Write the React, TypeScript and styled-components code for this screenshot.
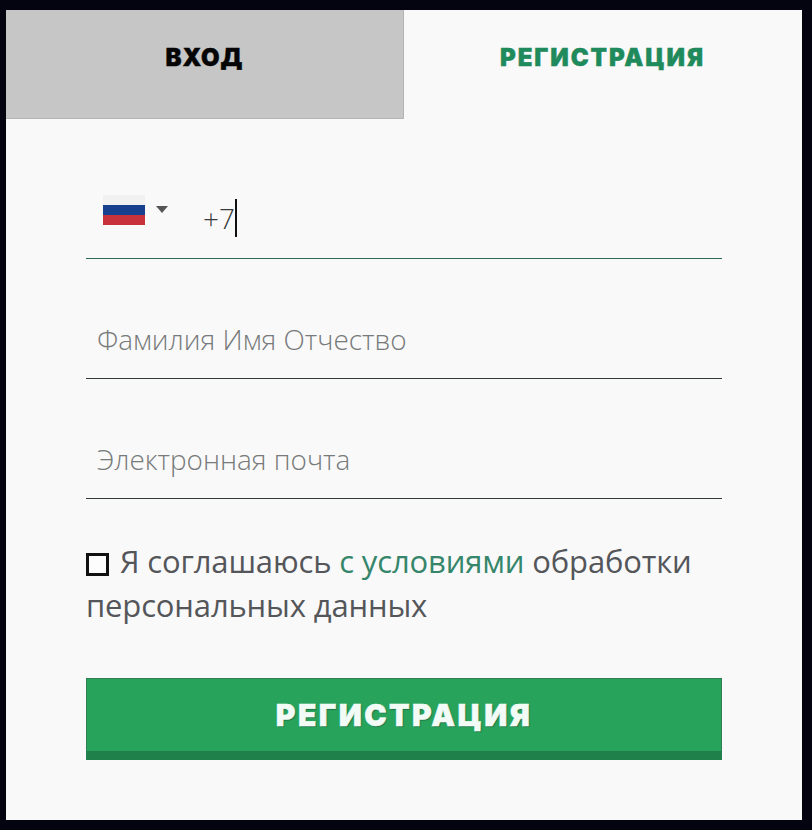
import React from "react";
import styled, { createGlobalStyle } from "styled-components";

const Global = createGlobalStyle`
  html, body { margin: 0; padding: 0; background: #02030f; }
  #root { width: 812px; height: 830px; overflow: hidden; }
`;

const Page = styled.div`
  width: 812px;
  height: 830px;
  box-sizing: border-box;
  padding: 10px 10px 10px 6px;
  background: #03040f;
`;

const Card = styled.div`
  width: 796px;
  height: 810px;
  background: #f9f9f9;
  display: flex;
  flex-direction: column;
`;

const Tabs = styled.div`
  display: grid;
  grid-template-columns: 398px 398px;
  height: 109px;
`;

const Tab = styled.div<{ $active?: boolean; $spacing: number }>`
  display: flex;
  align-items: center;
  justify-content: center;
  padding-bottom: 14px;
  box-sizing: border-box;
  background: ${(p) => (p.$active ? "#f9f9f9" : "#c7c6c6")};
  border-right: 1px solid ${(p) => (p.$active ? "transparent" : "#b4b4b4")};
  border-bottom: 1px solid ${(p) => (p.$active ? "transparent" : "#b4b4b4")};
  color: ${(p) => (p.$active ? "#1f8a5b" : "#050505")};
  font-family: Inter, "Noto Sans", sans-serif;
  font-weight: 900;
  font-size: 24px;
  letter-spacing: ${(p) => p.$spacing}px;
  -webkit-text-stroke: 0.4px currentColor;
`;

const Form = styled.div`
  display: flex;
  flex-direction: column;
  padding: 0 80px;
`;

const Field = styled.div<{ $first?: boolean }>`
  display: flex;
  align-items: center;
  height: ${(p) => (p.$first ? "140px" : "120px")};
  box-sizing: border-box;
  padding-top: ${(p) => (p.$first ? "70px" : "40px")};
  border-bottom: 1px solid ${(p) => (p.$first ? "#2f6a52" : "#33393a")};
  font-family: "Open Sans", sans-serif;
  font-weight: 300;
  font-size: 27.9px;
`;

const Placeholder = styled.span`
  margin-left: 11px;
  color: #77797a;
`;

const FlagPicker = styled.div`
  display: flex;
  align-items: flex-start;
  gap: 11px;
  width: 117px;
  margin-top: -27px;
  padding-left: 17px;
  box-sizing: border-box;
`;

const Flag = styled.svg`
  width: 42px;
  height: 30px;
  display: block;
`;

const Caret = styled.svg`
  width: 12px;
  height: 7px;
  margin-top: 11px;
`;

const Phone = styled.span`
  display: inline-flex;
  align-items: center;
  color: #3a3a3a;
  margin-top: -12px;
`;

const Cursor = styled.span`
  display: inline-block;
  width: 2px;
  height: 38px;
  background: #111;
`;

const Consent = styled.div`
  margin-top: 40px;
  font-family: "Open Sans", sans-serif;
  font-weight: 400;
  font-size: 31px;
  line-height: 44px;
  color: #54565a;
  letter-spacing: -0.15px;
`;

const Box = styled.span`
  display: inline-block;
  width: 23px;
  height: 23px;
  box-sizing: border-box;
  border: 3px solid #111;
  background: #fdfdfd;
  margin-right: 11px;
  vertical-align: -3px;
`;

const Terms = styled.span`
  color: #35866a;
`;

const Submit = styled.button`
  display: block;
  width: 636px;
  height: 82px;
  margin-top: 51px;
  padding: 0;
  border: 1px solid #2f7f58;
  border-bottom: 9px solid #1f8049;
  background: #27a35c;
  color: #f2fbf6;
  font-family: Inter, "Noto Sans", sans-serif;
  font-weight: 900;
  font-size: 30px;
  letter-spacing: 2.4px;
  -webkit-text-stroke: 0.5px currentColor;
  text-shadow: 1px 1px 1px #1d6b41;
`;

export default function App() {
  return (
    <Page>
      <Global />
      <Card>
        <Tabs>
          <Tab $spacing={1.1}>ВХОД</Tab>
          <Tab $active $spacing={1.9}>РЕГИСТРАЦИЯ</Tab>
        </Tabs>
        <Form>
          <Field $first>
            <FlagPicker>
              <Flag viewBox="0 0 42 30">
                <rect width="42" height="10" fill="#f1f1f1" />
                <rect y="10" width="42" height="10" fill="#17418f" />
                <rect y="20" width="42" height="10" fill="#c8323a" />
              </Flag>
              <Caret viewBox="0 0 12 7">
                <path d="M0 0h12L6 7z" fill="#555" />
              </Caret>
            </FlagPicker>
            <Phone>
              +7
              <Cursor />
            </Phone>
          </Field>
          <Field>
            <Placeholder>Фамилия Имя Отчество</Placeholder>
          </Field>
          <Field>
            <Placeholder>Электронная почта</Placeholder>
          </Field>
          <Consent>
            <Box />
            Я соглашаюсь <Terms>с условиями</Terms> обработки
            <br />
            персональных данных
          </Consent>
          <Submit>РЕГИСТРАЦИЯ</Submit>
        </Form>
      </Card>
    </Page>
  );
}
